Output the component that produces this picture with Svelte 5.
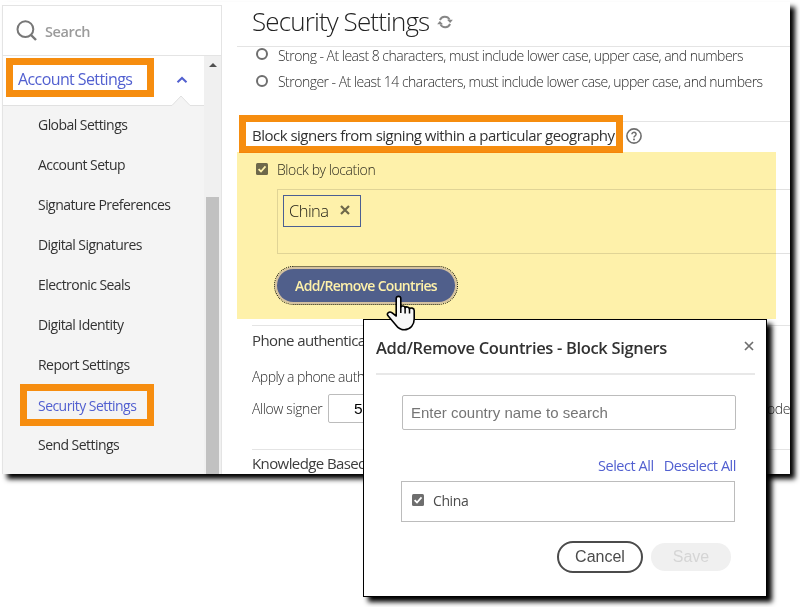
<script>
  const menuItems = [
    'Global Settings',
    'Account Setup',
    'Signature Preferences',
    'Digital Signatures',
    'Electronic Seals',
    'Digital Identity',
    'Report Settings',
    'Security Settings',
    'Send Settings'
  ];

  let active = $state('Security Settings');
  let strength = $state('');
  let blocked = $state(['China']);
  let search = $state('');

  const strengths = [
    { id: 'strong', text: 'Strong - At least 8 characters, must include lower case, upper case, and numbers' },
    { id: 'stronger', text: 'Stronger - At least 14 characters, must include lower case, upper case, and numbers' }
  ];
</script>

{#snippet check()}
  <svg class="check" viewBox="0 0 12 12" width="12" height="12">
    <rect width="12" height="12" rx="1.5" fill="#6e6e6e" />
    <path d="M2.6 6.1 5 8.5 9.5 3.4" fill="none" stroke="#fff" stroke-width="1.8" />
  </svg>
{/snippet}

<div class="screen">
  <div class="page">
    <aside class="sidebar">
      <div class="search">
        <svg viewBox="0 0 22 22" width="22" height="22">
          <circle cx="9.4" cy="9.2" r="7.9" fill="none" stroke="#777" stroke-width="2" />
          <path d="M15 15l5 5" stroke="#777" stroke-width="2.4" />
        </svg>
        <span>Search</span>
      </div>
      <div class="scroll">
        <nav>
          <div class="group">
            <span class="group-name">Account Settings</span>
            <svg class="chevron" viewBox="0 0 12 8" width="12" height="8">
              <path d="M1.5 6.3 6 2l4.5 4.3" fill="none" stroke="#5260d0" stroke-width="2" />
            </svg>
            <svg class="notch" viewBox="0 0 20 11" width="20" height="11">
              <path d="M0 11 10 1l10 10z" fill="#f4f4f4" />
              <path d="M0 10.5h1L10 1l9 9.5h1" fill="none" stroke="#e1e1e1" />
            </svg>
          </div>
          <ul>
            {#each menuItems as item}
              <li class:active={item === active}>
                <button onclick={() => (active = item)}>{item}</button>
              </li>
            {/each}
          </ul>
        </nav>
        <div class="track">
          <svg viewBox="0 0 8 4" width="8" height="4"><path d="M0 4 4 0l4 4z" fill="#505050" /></svg>
          <div class="thumb"></div>
        </div>
      </div>
    </aside>

    <main>
      <header>
        <h1>Security Settings</h1>
        <svg viewBox="0 0 16 14" width="16" height="14">
          <g fill="none" stroke="#868686" stroke-width="1.9">
            <path d="M2.9 5A5.4 5.4 0 0 1 12.6 4.6" />
            <path d="M13.1 9A5.4 5.4 0 0 1 3.4 9.4" />
          </g>
          <path d="M10 4.8h5.8L13.2 8z" fill="#868686" />
          <path d="M6 9.2H.2L2.8 6z" fill="#868686" />
        </svg>
      </header>

      <div class="strengths">
        {#each strengths as s}
          <label>
            <input type="radio" name="strength" value={s.id} bind:group={strength} />
            <span>{s.text}</span>
          </label>
        {/each}
      </div>

      <section class="geo">
        <div class="geo-head">
          <h2 class="boxed">Block signers from signing within a particular geography</h2>
          <svg viewBox="0 0 16 16" width="16" height="16">
            <circle cx="8" cy="8" r="7.1" fill="none" stroke="#6e6e6e" stroke-width="1.6" />
            <path d="M5.9 6.2a2.1 1.9 0 1 1 3.2 1.6C8.2 8.3 8 8.6 8 9.5" fill="none" stroke="#6e6e6e" stroke-width="1.5" />
            <rect x="7.1" y="10.6" width="1.8" height="1.7" fill="#6e6e6e" />
          </svg>
        </div>
        <div class="geo-body">
          <div class="location">{@render check()}<span>Block by location</span></div>
          <div class="tags">
            {#each blocked as country}
              <span class="tag">
                {country}
                <svg viewBox="0 0 10 10" width="10" height="10">
                  <path d="M1 1l8 8M9 1 1 9" stroke="#6e6e6e" stroke-width="2.2" />
                </svg>
              </span>
            {/each}
          </div>
          <button class="add">Add/Remove Countries</button>
          <div class="highlight"></div>
        </div>
      </section>

      <section class="phone">
        <h2>Phone authentication</h2>
        <p>Apply a phone authentication</p>
        <div class="attempts">
          <span>Allow signer</span>
          <span class="count">5</span>
          <span class="rest">code</span>
        </div>
      </section>

      <section class="knowledge">
        <h2>Knowledge Based</h2>
      </section>
    </main>
  </div>

  <div class="dialog" role="dialog">
    <div class="dialog-head">
      <h3>Add/Remove Countries - Block Signers</h3>
      <svg viewBox="0 0 10 10" width="10" height="10">
        <path d="M1 1l8 8M9 1 1 9" stroke="#6e6e6e" stroke-width="1.7" />
      </svg>
    </div>
    <div class="dialog-body">
      <input class="country-search" placeholder="Enter country name to search" bind:value={search} />
      <div class="links"><span>Select All</span><span>Deselect All</span></div>
      <div class="countries">
        {#each blocked as country}
          <div class="country">{@render check()}<span>{country}</span></div>
        {/each}
      </div>
    </div>
    <div class="actions">
      <button class="cancel">Cancel</button>
      <button class="save" disabled>Save</button>
    </div>
  </div>

  <svg class="cursor" viewBox="0 0 30 36" width="30" height="36">
    <path
      d="M10.2 21V3.6c0-3 4.6-3 4.6 0V12c.6-1.6 4-1.4 4.2.8.8-1.5 4.2-1.1 4.4 1 .9-1.3 4.8-1 4.8 1.7V24c0 6-3.6 10.6-10 10.8-4.2 0-6.4-2-8.4-4.8L1.8 20.6c-1.4-2.4 1.6-4.6 4-2.9z"
      fill="#f7f7f7" stroke="#000" stroke-width="1.6" stroke-linejoin="round" />
    <path d="M14.8 11v7M19.1 12.5v6M23.5 13.5v5" stroke="#000" stroke-width="1.5" />
  </svg>
</div>

<style>
  :global(body) {
    background: #fff;
  }

  .screen {
    height: 607px;
    padding: 2px 0 0 2px;
    box-sizing: border-box;
    font-family: 'Open Sans', sans-serif;
    font-size: 14px;
    letter-spacing: -0.55px;
  }

  .screen * {
    box-sizing: border-box;
  }

  button,
  input {
    font: inherit;
    letter-spacing: inherit;
  }

  svg {
    display: block;
    flex: none;
  }

  h1,
  h2,
  h3,
  p,
  ul {
    margin: 0;
    padding: 0;
  }

  .page {
    display: flex;
    width: 788px;
    height: 472px;
    background: #fff;
    box-shadow: 5px 5px 5px #000;
  }

  .sidebar {
    display: flex;
    flex-direction: column;
    width: 220px;
    margin-top: 3px;
    border: 1px solid #e4e4e4;
    border-bottom: 0;
  }

  .search {
    display: flex;
    align-items: center;
    gap: 7px;
    height: 50px;
    padding: 1px 0 0 13px;
    border-bottom: 1px solid #e4e4e4;
    color: #9b9b9b;
    font-weight: 600;
    font-size: 14.5px;
    letter-spacing: -0.4px;
  }

  .scroll {
    display: flex;
    flex: 1;
    overflow: hidden;
  }

  nav {
    flex: 1;
    background: #f4f4f4;
  }

  .group {
    position: relative;
    display: flex;
    align-items: flex-start;
    height: 50px;
    padding: 2px 0 0 3px;
    background: #fff;
    border-bottom: 1px solid #e1e1e1;
  }

  .group-name {
    width: 148px;
    height: 39px;
    padding-left: 5px;
    border: 7px solid #f68d0f;
    color: #5260d0;
    font-size: 16px;
    line-height: 28px;
    letter-spacing: -0.6px;
    white-space: nowrap;
  }

  .chevron {
    margin: 18px 0 0 22px;
  }

  .notch {
    position: absolute;
    right: 13px;
    bottom: -1px;
  }

  ul {
    list-style: none;
  }

  li {
    display: flex;
    width: 134px;
    height: 40px;
    margin-left: 17px;
  }

  li button {
    padding: 0 0 3px 18px;
    border: 0;
    background: none;
    color: #323232;
    white-space: nowrap;
  }

  li.active {
    height: 42px;
    margin-top: -2px;
    border: 7px solid #f68d0f;
  }

  li.active button {
    padding: 0 0 0 11px;
    color: #5260d0;
  }

  .track {
    display: flex;
    flex-direction: column;
    align-items: center;
    width: 17px;
    padding-top: 7px;
    background: #f0f0f0;
  }

  .thumb {
    width: 13px;
    flex: 1;
    margin: 130px 0 0 0;
    background: #c1c1c1;
  }

  main {
    flex: 1;
    min-width: 0;
    padding-left: 15px;
    color: #4b4b4b;
    overflow: hidden;
  }

  header {
    display: flex;
    align-items: center;
    gap: 6px;
    height: 45px;
    padding: 0 0 6px 15px;
    border-bottom: 1px solid #e4e4e4;
  }

  h1 {
    width: 179px;
    color: #222;
    font-weight: 300;
    font-size: 26px;
    line-height: 32px;
    letter-spacing: -0.88px;
    white-space: nowrap;
  }

  header svg {
    margin-top: 2px;
  }

  .strengths {
    height: 74px;
    padding-left: 19px;
  }

  label {
    display: flex;
    align-items: center;
    gap: 10px;
    height: 27px;
    color: #2c2c2c;
    font-weight: 300;
    letter-spacing: -0.52px;
    white-space: nowrap;
  }

  label:first-child {
    height: 21px;
    padding-bottom: 5px;
  }

  input[type='radio'] {
    appearance: none;
    width: 12px;
    height: 12px;
    margin: 0 0 2px;
    border: 2px solid #6e6e6e;
    border-radius: 50%;
  }

  .geo {
    height: 204px;
  }

  h2 {
    font-weight: 400;
    font-size: 15px;
    letter-spacing: -0.51px;
    white-space: nowrap;
  }

  .geo-head {
    display: flex;
    align-items: center;
    gap: 3px;
    height: 31px;
    margin-left: 15px;
    border-top: 1px solid #e4e4e4;
  }

  .geo-head .boxed {
    flex: none;
    width: 384px;
    height: 38px;
    margin: -6px 0 0 -13px;
    padding-left: 6px;
    border: 7px solid #f68d0f;
    line-height: 27px;
    color: #323232;
  }

  .geo-head svg {
    margin-top: -2px;
  }

  .geo-body {
    position: relative;
    display: flex;
    flex-direction: column;
    height: 167px;
    padding-top: 7px;
  }

  .highlight {
    position: absolute;
    top: 0;
    left: 0;
    width: 539px;
    height: 167px;
    background: #fef1aa;
    mix-blend-mode: multiply;
    pointer-events: none;
  }

  .location {
    display: flex;
    align-items: center;
    gap: 9px;
    height: 20px;
    margin-left: 19px;
    color: #2c2c2c;
    font-weight: 300;
    letter-spacing: -0.42px;
  }

  .tags {
    height: 65px;
    margin: 10px 0 0 40px;
    padding: 5px;
    border: 1px solid #e1e1e1;
    border-right: 0;
  }

  .tag {
    display: flex;
    align-items: center;
    justify-content: space-between;
    width: 78px;
    height: 32px;
    padding: 0 10px 2px 5px;
    border: 1px solid #4b64dd;
    color: #222;
    font-size: 16.5px;
    font-weight: 300;
  }

  .add {
    width: 178px;
    height: 33px;
    margin: 15px 0 0 40px;
    padding: 0;
    border: 0;
    border-radius: 17px;
    outline: 1px dotted #000;
    outline-offset: 2px;
    box-shadow: 0 0 0 2px #d5cdf0;
    background: #5064d0;
    color: #fff;
    font-weight: 600;
    letter-spacing: -0.7px;
  }

  .phone,
  .knowledge {
    margin-left: 15px;
    border-top: 1px solid #e4e4e4;
  }

  .phone {
    height: 124px;
    padding-top: 4px;
    color: #2c2c2c;
    font-weight: 300;
  }

  .phone h2,
  .knowledge h2 {
    color: #3c3c3c;
    letter-spacing: -0.6px;
  }

  .phone h2 {
    line-height: 20px;
  }

  .phone p {
    margin-top: 17px;
    line-height: 20px;
  }

  .attempts {
    display: flex;
    align-items: center;
    gap: 4px;
    margin-top: 7px;
    letter-spacing: -0.4px;
  }

  .attempts span:first-child {
    width: 72px;
    white-space: nowrap;
  }

  .count {
    width: 60px;
    height: 29px;
    padding-left: 25px;
    border: 1px solid #bcbcbc;
    border-radius: 2px;
    color: #000;
    font: 15.5px/27px 'Liberation Sans', sans-serif;
  }

  .rest {
    margin-left: auto;
  }

  .knowledge h2 {
    line-height: 27px;
  }

  .dialog {
    position: absolute;
    top: 319px;
    left: 363px;
    width: 404px;
    height: 278px;
    padding: 0 11px 0 12px;
    border: 1px solid #000;
    background: #fff;
    box-shadow: 5px 5px 5px #000;
  }

  .dialog-head {
    display: flex;
    align-items: flex-start;
    justify-content: space-between;
    height: 55px;
    padding: 16px 1px 0 0;
    border-bottom: 2px solid #e8e8e8;
  }

  h3 {
    color: #323232;
    font-size: 16.5px;
    font-weight: 600;
    line-height: 24px;
    letter-spacing: -0.33px;
    white-space: nowrap;
  }

  .dialog-head svg {
    margin-top: 5px;
  }

  .dialog-body {
    padding: 20px 19px 0 25px;
  }

  .country-search {
    display: block;
    width: 334px;
    height: 35px;
    margin-left: 1px;
    padding: 0 8px;
    border: 1px solid #bcbcbc;
    border-radius: 2px;
    outline: 0;
    font-family: 'Liberation Sans', sans-serif;
    font-size: 15px;
    letter-spacing: 0;
  }

  .country-search::placeholder {
    color: #757575;
  }

  .links {
    display: flex;
    justify-content: flex-end;
    gap: 10px;
    height: 51px;
    padding-top: 26px;
    color: #5260d0;
    font-size: 14.5px;
    line-height: 20px;
    letter-spacing: -0.46px;
  }

  .countries {
    width: 334px;
    height: 41px;
    padding: 8px 10px;
    border: 1px solid #bcbcbc;
  }

  .country {
    display: flex;
    align-items: center;
    gap: 9px;
    height: 20px;
    color: #4b4b4b;
    letter-spacing: -0.4px;
  }

  .actions {
    display: flex;
    align-items: center;
    justify-content: flex-end;
    gap: 8px;
    margin: 19px 24px 0 0;
    font-family: 'Liberation Sans', sans-serif;
    font-size: 16px;
    letter-spacing: 0;
  }

  .actions button {
    padding: 0;
    border-radius: 16px;
  }

  .cancel {
    width: 86px;
    height: 32px;
    border: 2px solid #4b4b4b;
    background: #fff;
    color: #4b4b4b;
  }

  .save {
    width: 80px;
    height: 28px;
    border: 0;
    background: #f0f0f0;
    color: #d5d5d5;
  }

  .cursor {
    position: absolute;
    top: 295px;
    left: 386px;
  }
</style>
